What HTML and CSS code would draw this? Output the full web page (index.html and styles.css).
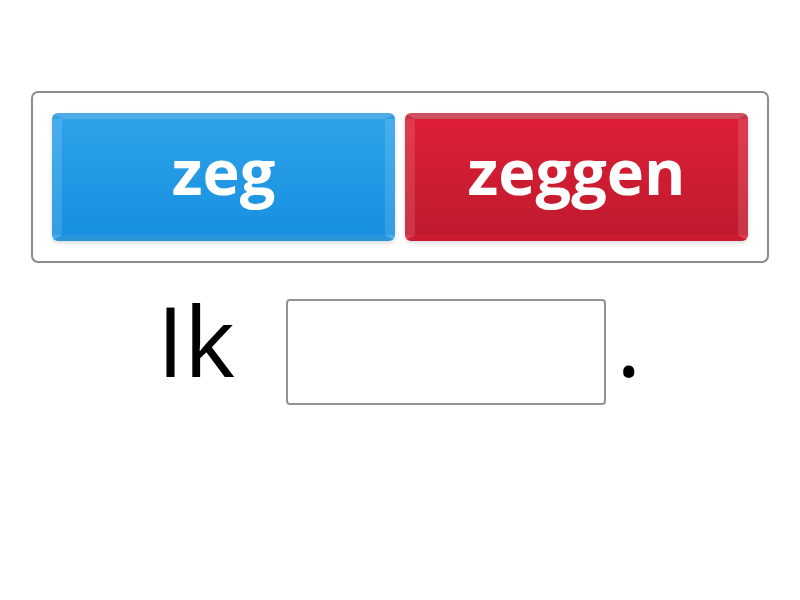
FILE: index.html
```html
<!DOCTYPE html>
<html lang="nl">
<head>
    <meta charset="UTF-8">
    <meta name="viewport" content="width=device-width, initial-scale=1.0">
    <title>Ik zeg</title>
    <link rel="stylesheet" href="styles.css">
</head>
<body>
    <div class="page">
        <div class="choices">
            <button class="choice blue">zeg</button>
            <button class="choice red">zeggen</button>
        </div>
        <div class="sentence">
            <span class="word">Ik</span>
            <div class="blank"></div>
            <span class="dot">.</span>
        </div>
    </div>
</body>
</html>
```

FILE: styles.css
```css
body {
    margin: 0;
    background: #fff;
    font-family: "Open Sans", "Liberation Sans", sans-serif;
}
.page {
    width: 800px;
    height: 600px;
    padding-top: 91px;
    box-sizing: border-box;
}
.choices {
    margin: 0 31px;
    height: 172px;
    box-sizing: border-box;
    border: 2px solid #8c8c8c;
    border-radius: 7px;
    padding: 20px 19px;
    display: flex;
    gap: 10px;
}
.choice {
    flex: 1;
    height: 128px;
    border-radius: 6px;
    border-style: solid;
    border-width: 6px 10px 6px 10px;
    border-color: rgba(255, 255, 255, 0.24) rgba(255, 255, 255, 0.12) rgba(0, 0, 0, 0.08) rgba(255, 255, 255, 0.12);
    color: #fff;
    font-family: "Open Sans", sans-serif;
    font-weight: bold;
    font-size: 63px;
    line-height: 1;
    padding: 0 0 14px;
    box-shadow: 0 2px 4px rgba(0, 0, 0, 0.15);
}
.blue {
    background: linear-gradient(#2ea2ea, #1790e0);
}
.red {
    background: linear-gradient(#dd1f36, #bf1a2e);
}
.sentence {
    display: flex;
    align-items: flex-start;
    margin-top: 36px;
    padding-left: 157px;
}
.word {
    font-size: 97px;
    line-height: 80px;
}
.blank {
    width: 320px;
    height: 106px;
    box-sizing: border-box;
    border: 2px solid #939393;
    border-radius: 4px;
    margin-left: 51px;
    margin-right: 10px;
}
.dot {
    font-size: 97px;
    line-height: 80px;
}
```
